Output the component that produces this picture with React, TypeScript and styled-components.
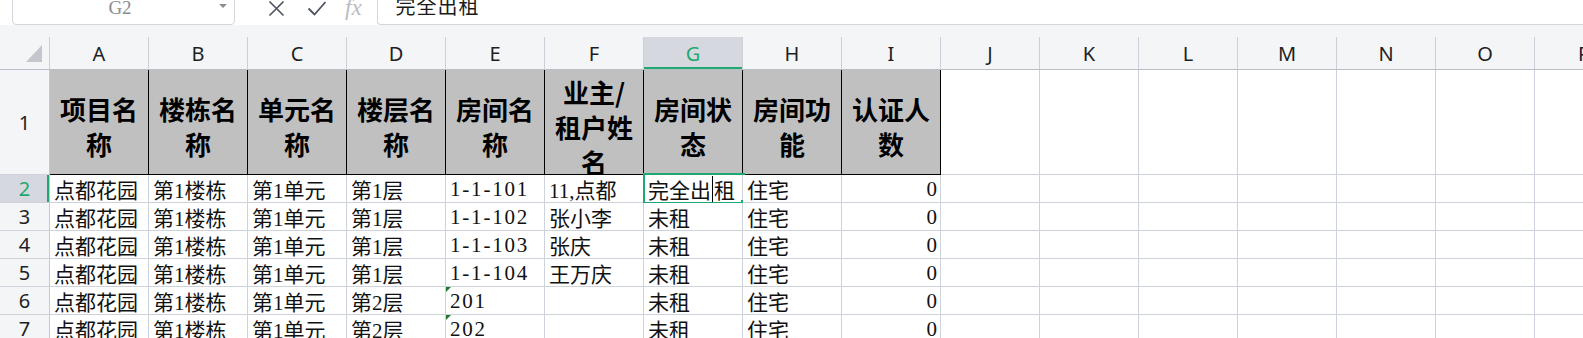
import { Fragment } from "react";
import styled, { createGlobalStyle } from "styled-components";

const GREEN = "#1fa870";
const HEAD_BG = "#f4f5f7";
const HEAD_SEL = "#d5d8df";
const GRID = "#cdd2dc";

const COLUMNS = ["A", "B", "C", "D", "E", "F", "G", "H", "I", "J", "K", "L", "M", "N", "O", "P"];

const LABELS: string[][] = [
  ["项目名", "称"],
  ["楼栋名", "称"],
  ["单元名", "称"],
  ["楼层名", "称"],
  ["房间名", "称"],
  ["业主/", "租户姓", "名"],
  ["房间状", "态"],
  ["房间功", "能"],
  ["认证人", "数"],
];

const ROWS: string[][] = [
  ["点都花园", "第1楼栋", "第1单元", "第1层", "1-1-101", "11,点都", "完全出租", "住宅", "0"],
  ["点都花园", "第1楼栋", "第1单元", "第1层", "1-1-102", "张小李", "未租", "住宅", "0"],
  ["点都花园", "第1楼栋", "第1单元", "第1层", "1-1-103", "张庆", "未租", "住宅", "0"],
  ["点都花园", "第1楼栋", "第1单元", "第1层", "1-1-104", "王万庆", "未租", "住宅", "0"],
  ["点都花园", "第1楼栋", "第1单元", "第2层", "201", "", "未租", "住宅", "0"],
  ["点都花园", "第1楼栋", "第1单元", "第2层", "202", "", "未租", "住宅", "0"],
];

const GlobalStyle = createGlobalStyle`
  html, body {
    margin: 0;
    padding: 0;
    background: #fff;
    overflow: hidden;
  }
  body {
    font-family: "Noto Sans", "Noto Sans CJK SC", sans-serif;
  }
`;

const Page = styled.div`
  width: 1583px;
  height: 338px;
  overflow: hidden;
  background: ${HEAD_BG};
`;

const FormulaBar = styled.div`
  height: 25px;
  background: #fff;
  display: flex;
  align-items: flex-end;
  overflow: hidden;
  padding-left: 12px;
`;

const NameBox = styled.div`
  width: 223px;
  height: 34px;
  box-sizing: border-box;
  border: 1px solid #d3d6dc;
  border-radius: 4px;
  display: flex;
  align-items: center;
  padding-right: 7px;
  flex-shrink: 0;
`;

const NameText = styled.span`
  flex: 1;
  text-align: center;
  font-family: "Liberation Serif", serif;
  font-size: 19px;
  color: #8a8c90;
  padding-left: 8px;
`;

const Caret = styled.span`
  width: 0;
  height: 0;
  border-left: 4px solid transparent;
  border-right: 4px solid transparent;
  border-top: 4px solid #8a8d94;
  margin-bottom: 4px;
`;

const Tools = styled.div`
  height: 34px;
  display: flex;
  align-items: center;
  gap: 22px;
  margin-left: 33px;
  flex-shrink: 0;
`;

const Fx = styled.span`
  font-family: "Liberation Serif", serif;
  font-style: italic;
  font-size: 23px;
  color: #b8bbc1;
  margin-left: -4px;
`;

const FormulaInput = styled.div`
  flex: 1;
  height: 34px;
  box-sizing: border-box;
  margin-left: 15px;
  border: 1px solid #d3d6dc;
  border-right: none;
  border-radius: 4px 0 0 4px;
  display: flex;
  align-items: center;
  padding: 0 0 6px 18px;
  font-family: "Noto Sans CJK SC", sans-serif;
  font-size: 20px;
  letter-spacing: 1px;
  color: #1b1b1b;
`;

const Sheet = styled.div`
  margin-top: 12px;
  display: grid;
  grid-template-columns: 50px repeat(${COLUMNS.length}, 99px);
  grid-template-rows: 33px 105px repeat(${ROWS.length}, 28px);
`;

const Corner = styled.div`
  box-sizing: border-box;
  border-right: 1px solid #cbd0d9;
  border-bottom: 1px solid #b8bec9;
  display: flex;
  align-items: flex-end;
  justify-content: flex-end;
  padding: 0 7px 7px 0;
`;

const ColHead = styled.div<{ $active?: boolean }>`
  box-sizing: border-box;
  background: ${(p) => (p.$active ? HEAD_SEL : HEAD_BG)};
  border-right: 1px solid #cbd0d9;
  border-bottom: 1px solid #b8bec9;
  box-shadow: ${(p) => (p.$active ? `inset 0 -2px 0 ${GREEN}` : "none")};
  display: flex;
  align-items: center;
  justify-content: center;
  font-size: 20px;
  color: ${(p) => (p.$active ? GREEN : "#1d1f24")};
`;

const RowHead = styled.div<{ $active?: boolean }>`
  box-sizing: border-box;
  background: ${(p) => (p.$active ? HEAD_SEL : HEAD_BG)};
  border-right: 1px solid #c3c8d2;
  border-bottom: 1px solid ${GRID};
  box-shadow: ${(p) => (p.$active ? `inset -2px 0 0 ${GREEN}` : "none")};
  display: flex;
  align-items: center;
  justify-content: center;
  font-size: 20px;
  color: ${(p) => (p.$active ? GREEN : "#1d1f24")};
`;

const TitleCell = styled.div`
  box-sizing: border-box;
  background: #c0c0c0;
  border-right: 1px solid #000;
  border-bottom: 1px solid #000;
  display: flex;
  flex-direction: column;
  align-items: center;
  justify-content: center;
  padding-top: 8px;
  font-family: "Noto Sans CJK SC", sans-serif;
  font-weight: 700;
  font-size: 26px;
  line-height: 35px;
  color: #000;
`;

const Cell = styled.div<{ $right?: boolean; $flag?: boolean; $num?: boolean }>`
  position: relative;
  box-sizing: border-box;
  background: #fff;
  border-right: 1px solid ${GRID};
  border-bottom: 1px solid ${GRID};
  display: flex;
  align-items: center;
  justify-content: ${(p) => (p.$right ? "flex-end" : "flex-start")};
  padding: 1px 3px 0 4px;
  white-space: nowrap;
  font-family: "Liberation Serif", "Noto Sans CJK SC", serif;
  font-size: 21px;
  letter-spacing: ${(p) => (p.$num ? "1.8px" : "0")};
  color: #111;

  &::before {
    content: "";
    display: ${(p) => (p.$flag ? "block" : "none")};
    position: absolute;
    top: 0;
    left: 0;
    border-top: 5px solid #1d7a2c;
    border-right: 5px solid transparent;
  }
`;

const ActiveFrame = styled.div`
  position: absolute;
  left: -1px;
  top: -2px;
  width: 102px;
  height: 31px;
  box-sizing: border-box;
  border: 2px solid ${GREEN};
  pointer-events: none;

  &::after {
    content: "";
    position: absolute;
    right: -3px;
    bottom: -3px;
    width: 5px;
    height: 5px;
    background: ${GREEN};
  }
`;

const TextCursor = styled.span`
  display: inline-block;
  width: 1px;
  height: 27px;
  background: #000;
  margin: 0 1px;
`;

const XIcon = () => (
  <svg width="17" height="17" viewBox="0 0 17 17">
    <path d="M1.5 1.5 L15.5 15.5 M15.5 1.5 L1.5 15.5" stroke="#4d5260" strokeWidth="1.6" fill="none" />
  </svg>
);

const CheckIcon = () => (
  <svg width="20" height="17" viewBox="0 0 20 17">
    <path d="M1.5 8.5 L7.5 14.5 L18.5 2" stroke="#4d5260" strokeWidth="1.8" fill="none" />
  </svg>
);

const CornerMark = () => (
  <svg width="16" height="17" viewBox="0 0 16 17">
    <polygon points="16,0 16,17 0,17" fill="#c3c6cc" />
  </svg>
);

export default function App() {
  return (
    <Page>
      <GlobalStyle />
      <FormulaBar>
        <NameBox>
          <NameText>G2</NameText>
          <Caret />
        </NameBox>
        <Tools>
          <XIcon />
          <CheckIcon />
          <Fx>fx</Fx>
        </Tools>
        <FormulaInput>完全出租</FormulaInput>
      </FormulaBar>
      <Sheet>
        <Corner>
          <CornerMark />
        </Corner>
        {COLUMNS.map((c) => (
          <ColHead key={c} $active={c === "G"}>
            {c}
          </ColHead>
        ))}

        <RowHead>1</RowHead>
        {COLUMNS.map((c, i) =>
          i < LABELS.length ? (
            <TitleCell key={c}>
              {LABELS[i].map((line) => (
                <span key={line}>{line}</span>
              ))}
            </TitleCell>
          ) : (
            <Cell key={c} />
          )
        )}

        {ROWS.map((row, r) => (
          <Fragment key={r}>
            <RowHead $active={r === 0}>{r + 2}</RowHead>
            {COLUMNS.map((c, i) => {
              if (r === 0 && c === "G") {
                return (
                  <Cell key={c}>
                    完全出<TextCursor />租
                    <ActiveFrame />
                  </Cell>
                );
              }
              return (
                <Cell key={c} $right={c === "I"} $num={c === "E"} $flag={c === "E" && r >= 4}>
                  {row[i] ?? ""}
                </Cell>
              );
            })}
          </Fragment>
        ))}
      </Sheet>
    </Page>
  );
}
